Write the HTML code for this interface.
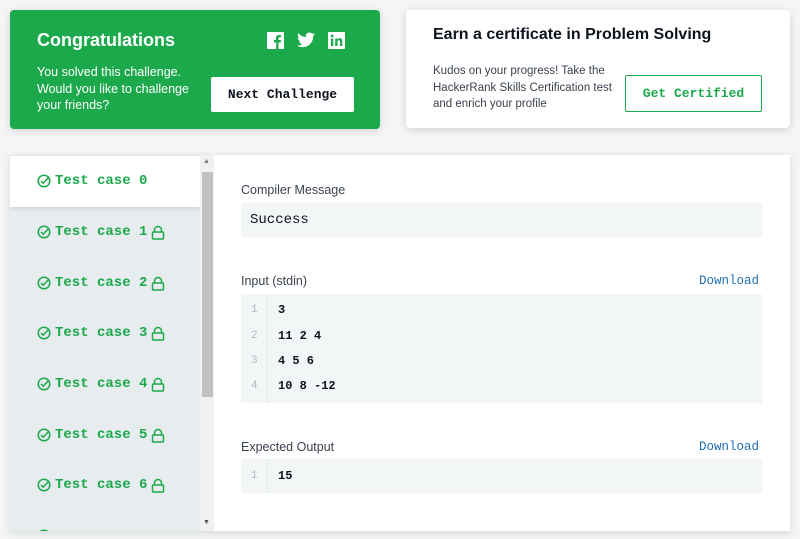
<!DOCTYPE html>
<html><head><style>
body{margin:0;width:800px;height:539px;background:#f3f5f6;font-family:"Liberation Sans",sans-serif;position:relative;overflow:hidden}
.abs{position:absolute}
.mono{font-family:"Liberation Mono",monospace}
.g{background:#1ba94c;left:10px;top:10px;width:370px;height:119px;border-radius:4px;box-shadow:0 2px 8px rgba(0,0,0,.15);color:#fff}
.c{background:#fff;left:406px;top:10px;width:384px;height:118px;border-radius:4px;box-shadow:0 2px 8px rgba(0,0,0,.15)}
.panel{left:10px;top:155px;width:780px;height:376px;background:#fff;box-shadow:0 2px 8px rgba(0,0,0,.12);overflow:hidden}
.list{left:0;top:0;width:190px;height:376px;background:#e7edef}
.row{position:absolute;left:0;width:190px;height:51px;color:#1ba94c;font-weight:bold;font-size:14px}
.row span{position:absolute;left:45px;top:17px}
.lbl{font-size:12.5px;color:#39424e}
.box{background:#f3f6f7}
.dl{font-size:12.5px;color:#1f6fb5}
.ln{position:absolute;left:10px;font-size:11px;color:#b0b8bd}
.cd{position:absolute;left:37px;font-size:12px;font-weight:bold;color:#0e141e}
</style></head><body>
<div class="abs g">
 <div class="abs" style="left:27px;top:20px;font-size:18px;font-weight:bold">Congratulations</div>
 <div class="abs" style="left:27px;top:54px;font-size:12.5px;line-height:16.5px">You solved this challenge.<br>Would you like to challenge<br>your friends?</div>
 <svg class="abs" style="left:257px;top:22px" width="17" height="17"><rect width="17" height="17" rx="1" fill="#fff"/><path d="M11.5 17V10.5h2.2l.3-2.5h-2.5V6.5c0-.7.2-1.2 1.2-1.2H14V3.1c-.2 0-1-.1-1.9-.1-1.9 0-3.2 1.1-3.2 3.3V8H7v2.5h2.2V17z" fill="#1ba94c"/></svg>
 <svg class="abs" style="left:287px;top:22px" width="18" height="16" viewBox="0 0 24 20"><path d="M24 2.4c-.9.4-1.8.7-2.8.8 1-.6 1.8-1.6 2.2-2.7-1 .6-2 1-3.1 1.2C19.4.7 18.1 0 16.6 0c-2.7 0-4.9 2.2-4.9 4.9 0 .4 0 .8.1 1.1C7.7 5.8 4.1 3.9 1.7.9c-.4.7-.7 1.6-.7 2.5 0 1.7.9 3.2 2.2 4.1-.8 0-1.6-.2-2.2-.6v.1c0 2.4 1.7 4.4 3.9 4.8-.4.1-.8.2-1.3.2-.3 0-.6 0-.9-.1.6 2 2.4 3.4 4.6 3.4-1.7 1.3-3.8 2.1-6.1 2.1-.4 0-.8 0-1.2-.1 2.2 1.4 4.8 2.2 7.5 2.2 9.1 0 14-7.5 14-14v-.6c1-.7 1.8-1.6 2.5-2.5z" fill="#fff"/></svg>
 <svg class="abs" style="left:318px;top:22px" width="17" height="17"><rect width="17" height="17" rx="1" fill="#fff"/><rect x="3" y="6.5" width="2.3" height="7.5" fill="#1ba94c"/><circle cx="4.15" cy="4" r="1.4" fill="#1ba94c"/><path d="M7.2 6.5h2.2v1.1c.4-.7 1.2-1.3 2.4-1.3 2 0 2.5 1.3 2.5 3V14H12V10c0-1-.2-1.8-1.2-1.8S9.5 9 9.5 10V14H7.2z" fill="#1ba94c"/></svg>
 <div class="abs mono" style="left:201px;top:67px;width:143px;height:35px;background:#fff;border-radius:2px;color:#0e141e;font-size:13px;font-weight:bold;text-align:center;line-height:35px">Next Challenge</div>
</div>
<div class="abs c">
 <div class="abs" style="left:27px;top:16px;font-size:16px;font-weight:bold;color:#0e141e">Earn a certificate in Problem Solving</div>
 <div class="abs" style="left:27px;top:53px;font-size:11.5px;line-height:16.5px;color:#39424e">Kudos on your progress! Take the<br>HackerRank Skills Certification test<br>and enrich your profile</div>
 <div class="abs mono" style="left:219px;top:65px;width:135px;height:35px;border:1px solid #1ba94c;border-radius:2px;color:#1ba94c;font-size:13px;font-weight:bold;text-align:center;line-height:35px">Get Certified</div>
</div>
<div class="abs panel">
 <div class="abs list">
  <div class="row mono" style="top:1px;background:#fff;box-shadow:0 2px 4px rgba(0,0,0,.1)"><svg class="abs" style="left:27px;top:18px" width="14" height="14"><circle cx="7" cy="7" r="5.8" fill="none" stroke="#1ba94c" stroke-width="1.5"/><path d="M4 7l2.2 2.2L12 3" fill="none" stroke="#1ba94c" stroke-width="1.5"/></svg><span>Test case 0</span></div>
  <div class="row mono" style="top:52px"><svg class="abs" style="left:27px;top:18px" width="14" height="14"><circle cx="7" cy="7" r="5.8" fill="none" stroke="#1ba94c" stroke-width="1.5"/><path d="M4 7l2.2 2.2L12 3" fill="none" stroke="#1ba94c" stroke-width="1.5"/></svg><span>Test case 1</span><svg class="abs" style="left:141px;top:18px" width="14" height="15"><path d="M3.5 7V5a3.5 3.5 0 017 0v2" fill="none" stroke="#1ba94c" stroke-width="1.5"/><rect x="1.5" y="7" width="11" height="7" rx="1" fill="none" stroke="#1ba94c" stroke-width="1.5"/></svg></div>
  <div class="row mono" style="top:103px"><svg class="abs" style="left:27px;top:18px" width="14" height="14"><circle cx="7" cy="7" r="5.8" fill="none" stroke="#1ba94c" stroke-width="1.5"/><path d="M4 7l2.2 2.2L12 3" fill="none" stroke="#1ba94c" stroke-width="1.5"/></svg><span>Test case 2</span><svg class="abs" style="left:141px;top:18px" width="14" height="15"><path d="M3.5 7V5a3.5 3.5 0 017 0v2" fill="none" stroke="#1ba94c" stroke-width="1.5"/><rect x="1.5" y="7" width="11" height="7" rx="1" fill="none" stroke="#1ba94c" stroke-width="1.5"/></svg></div>
  <div class="row mono" style="top:153px"><svg class="abs" style="left:27px;top:18px" width="14" height="14"><circle cx="7" cy="7" r="5.8" fill="none" stroke="#1ba94c" stroke-width="1.5"/><path d="M4 7l2.2 2.2L12 3" fill="none" stroke="#1ba94c" stroke-width="1.5"/></svg><span>Test case 3</span><svg class="abs" style="left:141px;top:18px" width="14" height="15"><path d="M3.5 7V5a3.5 3.5 0 017 0v2" fill="none" stroke="#1ba94c" stroke-width="1.5"/><rect x="1.5" y="7" width="11" height="7" rx="1" fill="none" stroke="#1ba94c" stroke-width="1.5"/></svg></div>
  <div class="row mono" style="top:204px"><svg class="abs" style="left:27px;top:18px" width="14" height="14"><circle cx="7" cy="7" r="5.8" fill="none" stroke="#1ba94c" stroke-width="1.5"/><path d="M4 7l2.2 2.2L12 3" fill="none" stroke="#1ba94c" stroke-width="1.5"/></svg><span>Test case 4</span><svg class="abs" style="left:141px;top:18px" width="14" height="15"><path d="M3.5 7V5a3.5 3.5 0 017 0v2" fill="none" stroke="#1ba94c" stroke-width="1.5"/><rect x="1.5" y="7" width="11" height="7" rx="1" fill="none" stroke="#1ba94c" stroke-width="1.5"/></svg></div>
  <div class="row mono" style="top:255px"><svg class="abs" style="left:27px;top:18px" width="14" height="14"><circle cx="7" cy="7" r="5.8" fill="none" stroke="#1ba94c" stroke-width="1.5"/><path d="M4 7l2.2 2.2L12 3" fill="none" stroke="#1ba94c" stroke-width="1.5"/></svg><span>Test case 5</span><svg class="abs" style="left:141px;top:18px" width="14" height="15"><path d="M3.5 7V5a3.5 3.5 0 017 0v2" fill="none" stroke="#1ba94c" stroke-width="1.5"/><rect x="1.5" y="7" width="11" height="7" rx="1" fill="none" stroke="#1ba94c" stroke-width="1.5"/></svg></div>
  <div class="row mono" style="top:305px"><svg class="abs" style="left:27px;top:18px" width="14" height="14"><circle cx="7" cy="7" r="5.8" fill="none" stroke="#1ba94c" stroke-width="1.5"/><path d="M4 7l2.2 2.2L12 3" fill="none" stroke="#1ba94c" stroke-width="1.5"/></svg><span>Test case 6</span><svg class="abs" style="left:141px;top:18px" width="14" height="15"><path d="M3.5 7V5a3.5 3.5 0 017 0v2" fill="none" stroke="#1ba94c" stroke-width="1.5"/><rect x="1.5" y="7" width="11" height="7" rx="1" fill="none" stroke="#1ba94c" stroke-width="1.5"/></svg></div>
  <div class="row mono" style="top:356px"><svg class="abs" style="left:27px;top:18px" width="14" height="14"><circle cx="7" cy="7" r="5.8" fill="none" stroke="#1ba94c" stroke-width="1.5"/></svg></div>
 </div>
 <div class="abs" style="left:190px;top:0;width:14px;height:376px;background:#f1f1f1"></div>
 <div class="abs" style="left:192px;top:17px;width:11px;height:225px;background:#c1c1c1"></div>
 <div class="abs" style="left:193px;top:3px;font-size:7px;color:#777">▲</div>
 <div class="abs" style="left:193px;top:364px;font-size:7px;color:#555">▼</div>

 <div class="abs lbl" style="left:231px;top:28px">Compiler Message</div>
 <div class="abs box mono" style="left:231px;top:48px;width:521px;height:34px;font-size:14px;line-height:34px;color:#0e141e;text-indent:9px">Success</div>

 <div class="abs lbl" style="left:231px;top:119px">Input (stdin)</div>
 <div class="abs dl mono" style="left:689px;top:119px">Download</div>
 <div class="abs box mono" style="left:231px;top:139px;width:521px;height:109px">
  <div class="abs" style="left:26px;top:0;width:1px;height:109px;background:#e3e8ea"></div>
  <div class="ln" style="top:10px">1</div><div class="cd" style="top:9px">3</div>
  <div class="ln" style="top:36px">2</div><div class="cd" style="top:35px">11 2 4</div>
  <div class="ln" style="top:61px">3</div><div class="cd" style="top:60px">4 5 6</div>
  <div class="ln" style="top:86px">4</div><div class="cd" style="top:85px">10 8 -12</div>
 </div>

 <div class="abs lbl" style="left:231px;top:285px">Expected Output</div>
 <div class="abs dl mono" style="left:689px;top:285px">Download</div>
 <div class="abs box mono" style="left:231px;top:304px;width:521px;height:34px">
  <div class="abs" style="left:26px;top:0;width:1px;height:34px;background:#e3e8ea"></div>
  <div class="ln" style="top:11px">1</div><div class="cd" style="top:10px">15</div>
 </div>
</div>
</body></html>
